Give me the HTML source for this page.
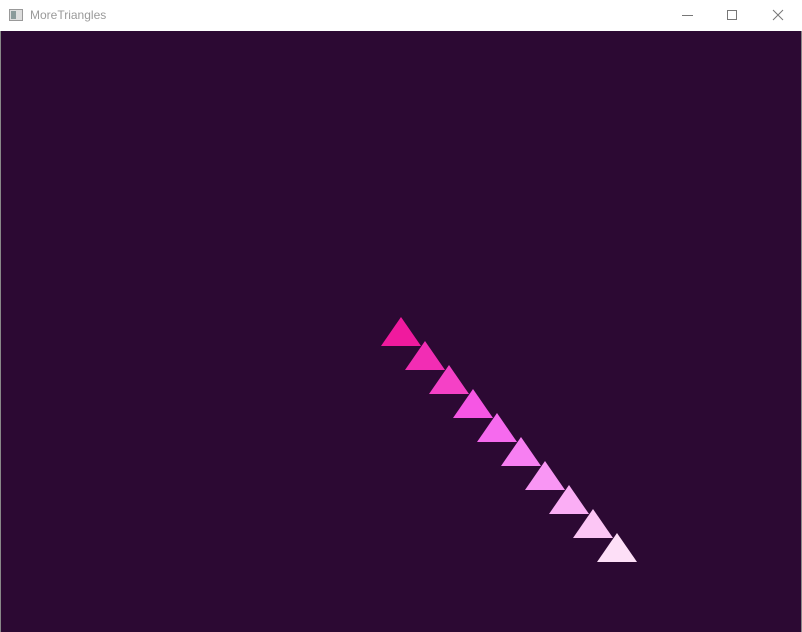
<!DOCTYPE html><html><head><style>
body{margin:0;width:802px;height:632px;overflow:hidden;background:#2c0933;font-family:"Liberation Sans",sans-serif}
.tb{position:absolute;left:0;top:0;width:802px;height:31px;background:#fff}
.t{position:absolute;left:30px;top:8px;font-size:12px;color:#9a9a9a}
</style></head><body>
<div class="tb"><div class="t">MoreTriangles</div>
<svg width="802" height="31" style="position:absolute;left:0;top:0">
<rect x="9.5" y="9.5" width="13" height="11" fill="#ddd" stroke="#999"/><rect x="11" y="11" width="5" height="8" fill="#8a9a9a"/>
<line x1="682" y1="15.5" x2="693" y2="15.5" stroke="#777"/>
<rect x="727.5" y="10.5" width="9" height="9" fill="none" stroke="#777"/>
<path d="M773 10L783 20M783 10L773 20" stroke="#777"/>
</svg></div>
<svg width="802" height="632" style="position:absolute;left:0;top:0">
<rect x="0" y="31" width="1" height="601" fill="#888"/><rect x="801" y="31" width="1" height="601" fill="#888"/>
<g>
<polygon points="401,317 381,346 421,346" fill="#f01a9e"/>
<polygon points="425,341 405,370 445,370" fill="#f22db4"/>
<polygon points="449,365 429,394 469,394" fill="#f541c6"/>
<polygon points="473,389 453,418 493,418" fill="#f656e4"/>
<polygon points="497,413 477,442 517,442" fill="#f66aee"/>
<polygon points="521,437 501,466 541,466" fill="#f77ff2"/>
<polygon points="545,461 525,490 565,490" fill="#f996f4"/>
<polygon points="569,485 549,514 589,514" fill="#fbaef5"/>
<polygon points="593,509 573,538 613,538" fill="#fcc6f5"/>
<polygon points="617,533 597,562 637,562" fill="#fddff7"/>
</g></svg>
</body></html>
